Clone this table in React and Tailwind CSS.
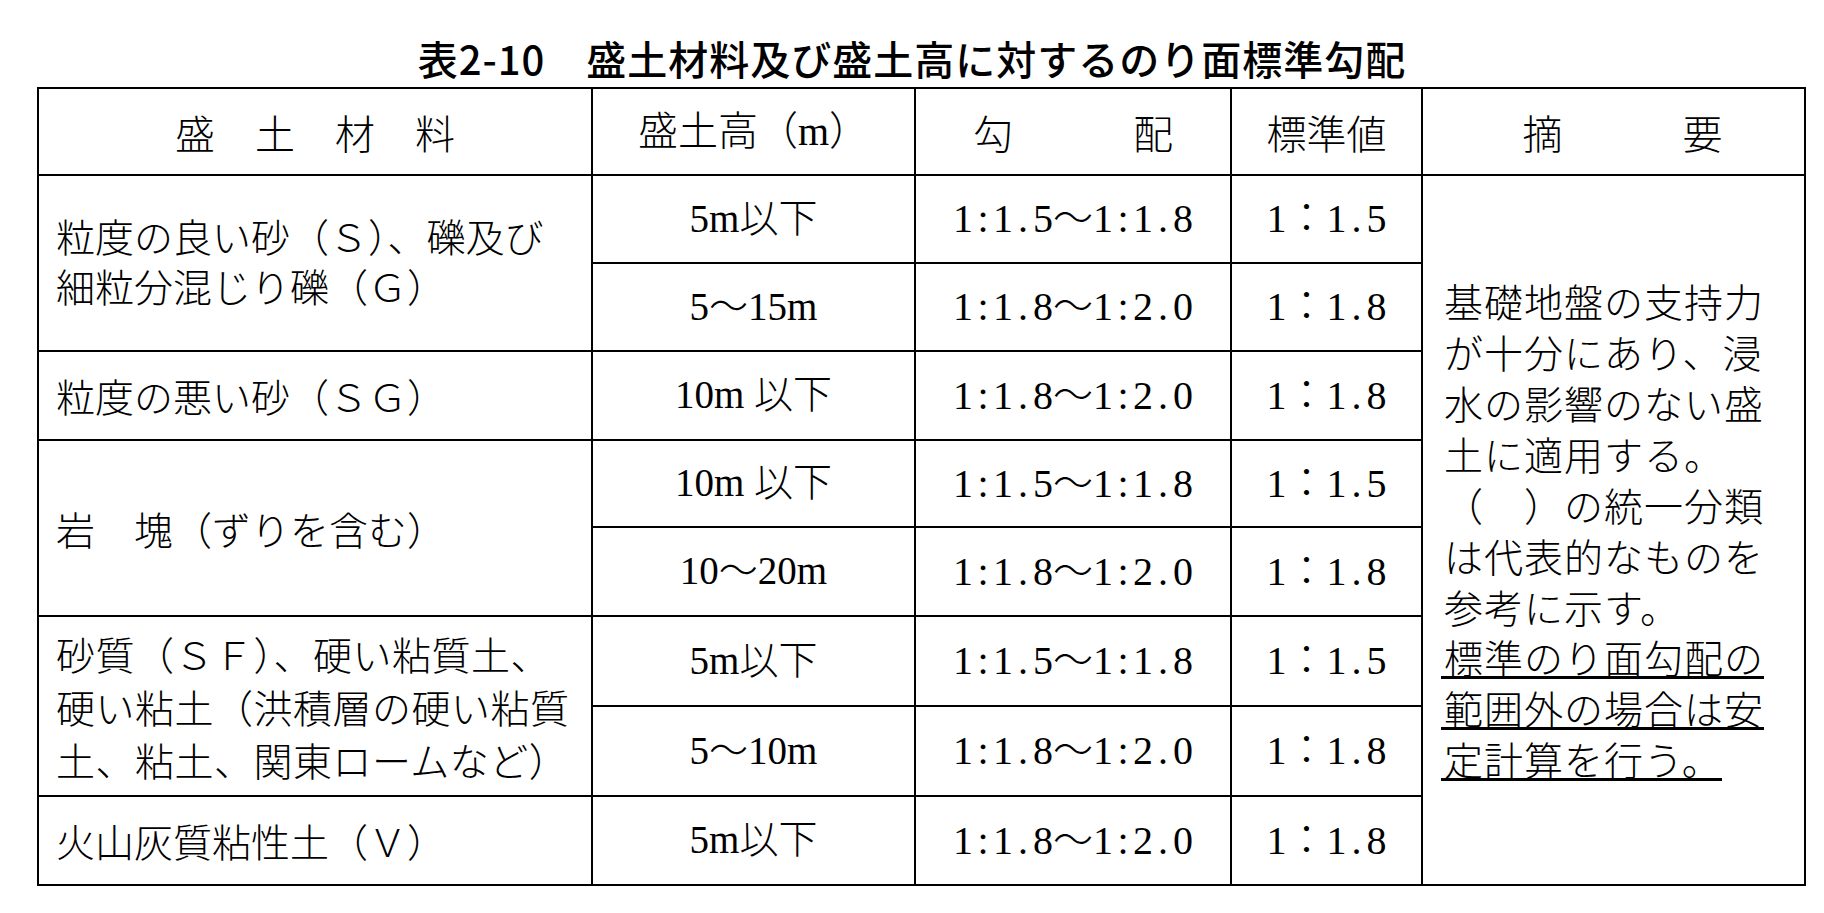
import React from 'react';

const serif = "font-['Liberation_Serif','Noto_Sans_CJK_JP',serif]";

// half-width ":" and "." sit in a half cell like the Mincho original
const Num = ({ t }) => (
  <span className="whitespace-nowrap">
    {[...t].map((c, i) =>
      c === ':' || c === '.' ? (
        <span key={i} className="inline-block w-[0.5em] text-center">{c}</span>
      ) : (
        <span key={i}>{c}</span>
      )
    )}
  </span>
);

const rows = [
  { h: '5m以下', s: '1:1.5～1:1.8', v: '1：1.5' },
  { h: '5～15m', s: '1:1.8～1:2.0', v: '1：1.8' },
  { h: '10m 以下', s: '1:1.8～1:2.0', v: '1：1.8' },
  { h: '10m 以下', s: '1:1.5～1:1.8', v: '1：1.5' },
  { h: '10～20m', s: '1:1.8～1:2.0', v: '1：1.8' },
  { h: '5m以下', s: '1:1.5～1:1.8', v: '1：1.5' },
  { h: '5～10m', s: '1:1.8～1:2.0', v: '1：1.8' },
  { h: '5m以下', s: '1:1.8～1:2.0', v: '1：1.8' },
];

const rowStart = ['row-start-2', 'row-start-3', 'row-start-4', 'row-start-5', 'row-start-6', 'row-start-7', 'row-start-8', 'row-start-9'];

const note = [
  '基礎地盤の支持力',
  'が十分にあり、浸',
  '水の影響のない盛',
  '土に適用する。',
  '（　）の統一分類',
  'は代表的なものを',
  '参考に示す。',
];
const noteUnder = ['標準のり面勾配の', '範囲外の場合は安', '定計算を行う。'];

const cell = 'bg-white flex items-center';

export default function App() {
  return (
    <div className="w-[1824px] h-[913px] bg-white text-black overflow-hidden font-['Noto_Sans_CJK_JP',sans-serif]">
      <div className="h-[87px] pt-[38px] text-center text-[40px] leading-[40px] font-medium tracking-[1px] whitespace-nowrap">
        表2-10　盛土材料及び盛土高に対するのり面標準勾配
      </div>

      <div className="ml-[37px] w-[1769px] grid grid-cols-[552px_321px_314px_189px_381px] grid-rows-[85px_86px_86px_87px_85px_87px_88px_88px_87px] gap-[2px] p-[2px] bg-black font-light">
        {/* header */}
        <div className={`${cell} justify-center col-start-1 row-start-1 text-[40px]`}>盛　土　材　料</div>
        <div className={`${cell} justify-center col-start-2 row-start-1 text-[40px] ${serif}`}>盛土高（m）</div>
        <div className={`${cell} justify-center col-start-3 row-start-1 text-[40px]`}>勾　　　配</div>
        <div className={`${cell} justify-center col-start-4 row-start-1 text-[40px]`}>標準値</div>
        <div className={`${cell} justify-center col-start-5 row-start-1 text-[40px] pl-[18px]`}>摘　　　要</div>

        {/* soil material column */}
        <div className={`${cell} col-start-1 row-start-2 row-span-2 pl-[17px] pb-[6px] text-[39px] leading-[50px]`}>
          <div>
            <div>粒度の良い砂（Ｓ）、礫及び</div>
            <div>細粒分混じり礫（Ｇ）</div>
          </div>
        </div>
        <div className={`${cell} col-start-1 row-start-4 pl-[17px] text-[39px]`}>粒度の悪い砂（ＳＧ）</div>
        <div className={`${cell} col-start-1 row-start-5 row-span-2 pl-[17px] text-[39px]`}>岩　塊（ずりを含む）</div>
        <div className={`${cell} col-start-1 row-start-7 row-span-2 pl-[17px] text-[39px] tracking-[0.5px] leading-[53px]`}>
          <div>
            <div>砂質（ＳＦ）、硬い粘質土、</div>
            <div>硬い粘土（洪積層の硬い粘質</div>
            <div>土、粘土、関東ロームなど）</div>
          </div>
        </div>
        <div className={`${cell} col-start-1 row-start-9 pl-[17px] text-[39px]`}>火山灰質粘性土（Ｖ）</div>

        {rows.map((r, i) => (
          <React.Fragment key={i}>
            <div className={`${cell} justify-center col-start-2 ${rowStart[i]} text-[39px] ${serif}`}>
              <Num t={r.h} />
            </div>
            <div className={`${cell} justify-center col-start-3 ${rowStart[i]} text-[40px] ${serif}`}>
              <Num t={r.s} />
            </div>
            <div className={`${cell} justify-center col-start-4 ${rowStart[i]} text-[40px] ${serif}`}>
              <Num t={r.v} />
            </div>
          </React.Fragment>
        ))}

        {/* remarks */}
        <div className={`${cell} col-start-5 row-start-2 row-span-8 pl-[21px] text-[39px] tracking-[1px] leading-[51px]`}>
          <div className="whitespace-nowrap">
            {note.map((l, i) => (
              <div key={i}>{l}</div>
            ))}
            {noteUnder.map((l, i) => (
              <div key={i} className="h-[51px] flex items-center">
                <span className="inline-block leading-[40px] border-b-[3px] border-black -ml-[3px] pl-[3px]">{l}</span>
              </div>
            ))}
          </div>
        </div>
      </div>
    </div>
  );
}
